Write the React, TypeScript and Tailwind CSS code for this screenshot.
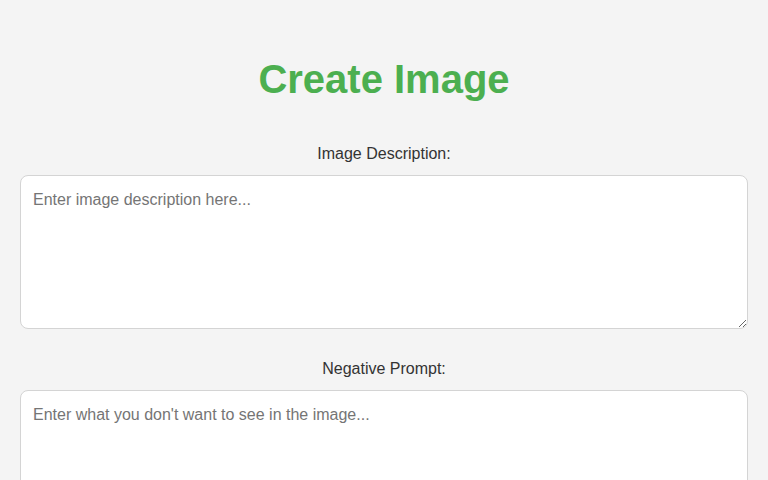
import React from 'react';

export default function App() {
  return (
    <div className="min-h-screen bg-[#f4f4f4] px-5 pt-[56px] font-['Liberation_Sans',Arial,sans-serif]">
      <h1 className="text-center text-[40px] font-bold leading-[46px] text-[#4caf50]">Create Image</h1>

      <label htmlFor="desc" className="mt-[43px] block text-center text-[16px] leading-[18px] text-[#333]">
        Image Description:
      </label>
      <textarea
        id="desc"
        placeholder="Enter image description here..."
        className="mt-[12px] block h-[154px] w-full rounded-lg border border-[#d4d4d4] bg-white p-3 text-[16px] leading-normal text-[#333] placeholder:text-[#757575] outline-none"
      />

      <label htmlFor="neg" className="mt-[31px] block text-center text-[16px] leading-[18px] text-[#333]">
        Negative Prompt:
      </label>
      <textarea
        id="neg"
        placeholder="Enter what you don't want to see in the image..."
        className="mt-[12px] block h-[154px] w-full rounded-lg border border-[#d4d4d4] bg-white p-3 text-[16px] leading-normal text-[#333] placeholder:text-[#757575] outline-none"
      />
    </div>
  );
}
